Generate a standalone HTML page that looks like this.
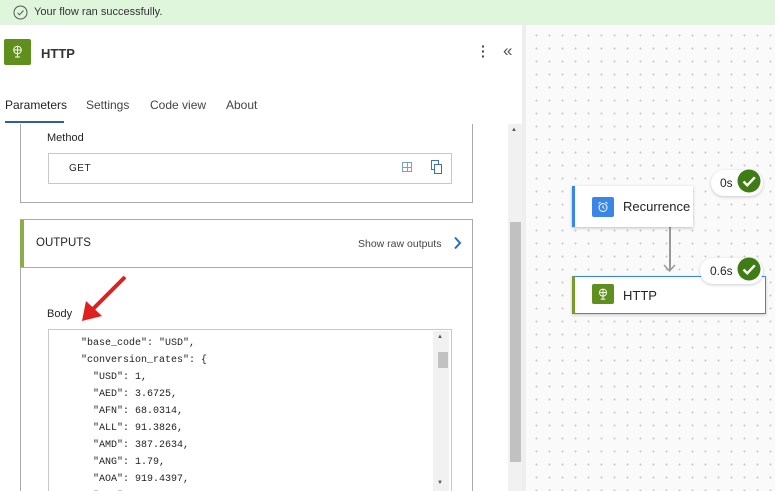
<!DOCTYPE html>
<html><head><meta charset="utf-8"><style>
*{box-sizing:border-box;margin:0;padding:0}
html{width:775px;height:491px;overflow:hidden}
body{width:775px;height:491px;overflow:hidden;position:relative;font-family:"Liberation Sans",sans-serif;background:#fff;color:#242424}
.abs{position:absolute}
.banner{left:0;top:0;width:775px;height:25px;background:#dff6dd;font-size:11px;color:#333}
.canvas{left:526px;top:25px;width:249px;height:466px;background-color:#fafafa;background-image:radial-gradient(circle,#c8c8c8 0.8px,transparent 1.2px);background-size:13px 13px;background-position:4px 4px}
.mono{font-family:"Liberation Mono",monospace;font-size:10px;color:#222}
.tab{font-size:12px;color:#444;top:98px}
</style></head><body>
<div class="abs banner">
<svg class="abs" style="left:13px;top:5px" width="15" height="15" viewBox="0 0 15 15"><circle cx="7.5" cy="7.5" r="6.5" fill="none" stroke="#555" stroke-width="1"/><path d="M4.5 7.8l2 2 4-4.3" fill="none" stroke="#555" stroke-width="1"/></svg>
<span class="abs" style="left:34px;top:6px">Your flow ran successfully.</span></div>
<div class="abs" style="left:522px;top:25px;width:4px;height:466px;background:#eee"></div>
<div class="abs canvas"></div>
<div class="abs" style="left:4px;top:39px;width:27px;height:26px;background:#5f8f1c;border-radius:2px"></div>
<svg class="abs" style="left:10px;top:44px" width="15" height="15" viewBox="0 0 15 15"><circle cx="7.5" cy="6" r="3.8" fill="none" stroke="#fff" stroke-width="1"/><path d="M3.7 6h7.6M7.5 2.2v7.6M7.5 10v3M5 13h5" stroke="#fff" stroke-width="1" fill="none"/></svg>
<div class="abs" style="left:41px;top:46px;font-size:13px;color:#333;font-weight:bold">HTTP</div>
<div class="abs" style="left:481px;top:44px;font-size:14px;font-weight:bold;color:#444;line-height:5px">·<br>·<br>·</div>
<div class="abs" style="left:503px;top:41px;font-size:17px;color:#555">«</div>
<div class="abs tab" style="left:5px;color:#242424">Parameters</div>
<div class="abs tab" style="left:86px">Settings</div>
<div class="abs tab" style="left:150px">Code view</div>
<div class="abs tab" style="left:226px">About</div>
<div class="abs" style="left:5px;top:121px;width:59px;height:2px;background:#2b5fa8"></div>
<div class="abs" style="left:20px;top:124px;width:453px;height:79px;border:1px solid #aaa;border-top:none"></div>
<div class="abs" style="left:47px;top:132px;font-size:11px">Method</div>
<div class="abs" style="left:48px;top:153px;width:404px;height:31px;border:1px solid #c8c8c8;background:#fff"></div>
<div class="abs" style="left:69px;top:163px;font-size:10px;letter-spacing:.5px">GET</div>
<div class="abs" style="left:402px;top:162px;width:10px;height:10px;border:1px solid #7a9fd0;background:linear-gradient(#7a9fd0,#7a9fd0) center/1px 100% no-repeat,linear-gradient(#7a9fd0,#7a9fd0) center/100% 1px no-repeat"></div>
<div class="abs" style="left:431px;top:160px;width:8px;height:10px;border:1px solid #3b6fc0"></div>
<div class="abs" style="left:434px;top:164px;width:8px;height:10px;border:1px solid #3b6fc0;background:#fff"></div>
<div class="abs" style="left:20px;top:219px;width:453px;height:290px;border:1px solid #aaa"></div>
<div class="abs" style="left:20px;top:267px;width:453px;height:1px;background:#aaa"></div>
<div class="abs" style="left:20px;top:220px;width:4px;height:47px;background:#8cac4a"></div>
<div class="abs" style="left:36px;top:237px;font-size:11.5px;color:#222">OUTPUTS</div>
<div class="abs" style="left:358px;top:238px;font-size:10.5px;color:#444">Show raw outputs</div>
<svg class="abs" style="left:453px;top:236px" width="9" height="14" viewBox="0 0 9 14"><path d="M2 1.5l5 5.5-5 5.5" fill="none" stroke="#2b6cc4" stroke-width="2"/></svg>
<svg class="abs" style="left:80px;top:274px" width="50" height="50" viewBox="0 0 50 50"><path d="M45 3L12 36" stroke="#e02020" stroke-width="4"/><path d="M2 47l4-20 16 15z" fill="#e02020"/></svg>
<div class="abs" style="left:47px;top:308px;font-size:11px">Body</div>
<div class="abs" style="left:48px;top:329px;width:404px;height:180px;border:1px solid #c8c8c8;background:#fff"></div>
<div class="abs" style="left:433px;top:331px;width:16px;height:160px;background:#f1f1f1"></div>
<div class="abs" style="left:438px;top:352px;width:10px;height:16px;background:#c1c1c1"></div>
<div class="abs" style="left:437px;top:334px;font-size:6px;color:#555">▲</div>
<div class="abs" style="left:437px;top:480px;font-size:6px;color:#555">▼</div>
<div class="abs mono" style="left:81px;top:335px;line-height:17px;white-space:pre">"base_code": "USD",
"conversion_rates": {
  "USD": 1,
  "AED": 3.6725,
  "AFN": 68.0314,
  "ALL": 91.3826,
  "AMD": 387.2634,
  "ANG": 1.79,
  "AOA": 919.4397,
  "ARS": 827.25,</div>
<div class="abs" style="left:508px;top:124px;width:14px;height:367px;background:#f1f1f1"></div>
<div class="abs" style="left:510px;top:222px;width:11px;height:240px;background:#c1c1c1"></div>
<div class="abs" style="left:511px;top:127px;font-size:6px;color:#555">▲</div>
<div class="abs" style="left:669px;top:226px;width:1.5px;height:44px;background:#999"></div>
<svg class="abs" style="left:663px;top:263px" width="13" height="10" viewBox="0 0 13 10"><path d="M1 2l5.5 6 5.5-6" fill="none" stroke="#999" stroke-width="1.5"/></svg>
<div class="abs" style="left:572px;top:186px;width:121px;height:41px;background:#fff;box-shadow:0 1px 3px rgba(0,0,0,.25);border-left:3px solid #3a86e8"></div>
<div class="abs" style="left:592px;top:197px;width:22px;height:20px;background:#3a86e8;border-radius:2px"></div>
<svg class="abs" style="left:597px;top:201px" width="12" height="12" viewBox="0 0 12 12"><circle cx="6" cy="6.5" r="4" fill="none" stroke="#fff" stroke-width="1"/><path d="M6 4.5V6.5l1.3 1M1.5 2.5l2-1.5M10.5 2.5l-2-1.5" stroke="#fff" fill="none" stroke-width="1"/></svg>
<div class="abs" style="left:623px;top:199px;font-size:13px;color:#242424">Recurrence</div>
<div class="abs" style="left:572px;top:276px;width:194px;height:38px;background:#fff;border:1px solid #3a86e8;border-left:3px solid #7a9a2a;box-shadow:0 1px 3px rgba(0,0,0,.2)"></div>
<div class="abs" style="left:592px;top:284px;width:22px;height:20px;background:#5f8f1c;border-radius:2px"></div>
<svg class="abs" style="left:596px;top:287px" width="14" height="14" viewBox="0 0 15 15"><circle cx="7.5" cy="6" r="3.8" fill="none" stroke="#fff" stroke-width="1"/><path d="M3.7 6h7.6M7.5 2.2v7.6M7.5 10v3M5 13h5" stroke="#fff" stroke-width="1" fill="none"/></svg>
<div class="abs" style="left:623px;top:288px;font-size:13px;color:#242424">HTTP</div>
<div class="abs" style="left:711px;top:170px;width:52px;height:26px;background:#fff;border-radius:13px;box-shadow:0 1px 3px rgba(0,0,0,.2)"></div>
<div class="abs" style="left:720px;top:176px;font-size:12px">0s</div>
<div class="abs" style="left:700px;top:258px;width:63px;height:26px;background:#fff;border-radius:13px;box-shadow:0 1px 3px rgba(0,0,0,.2)"></div>
<div class="abs" style="left:710px;top:264px;font-size:12px">0.6s</div>
<svg class="abs" style="left:737px;top:169px" width="24" height="24" viewBox="0 0 24 24"><circle cx="12" cy="12" r="11.5" fill="#3f7d14"/><path d="M6.5 12.5l3.8 3.8 7.5-8" fill="none" stroke="#fff" stroke-width="2.4"/></svg>
<svg class="abs" style="left:737px;top:257px" width="24" height="24" viewBox="0 0 24 24"><circle cx="12" cy="12" r="11.5" fill="#3f7d14"/><path d="M6.5 12.5l3.8 3.8 7.5-8" fill="none" stroke="#fff" stroke-width="2.4"/></svg>
</body></html>
